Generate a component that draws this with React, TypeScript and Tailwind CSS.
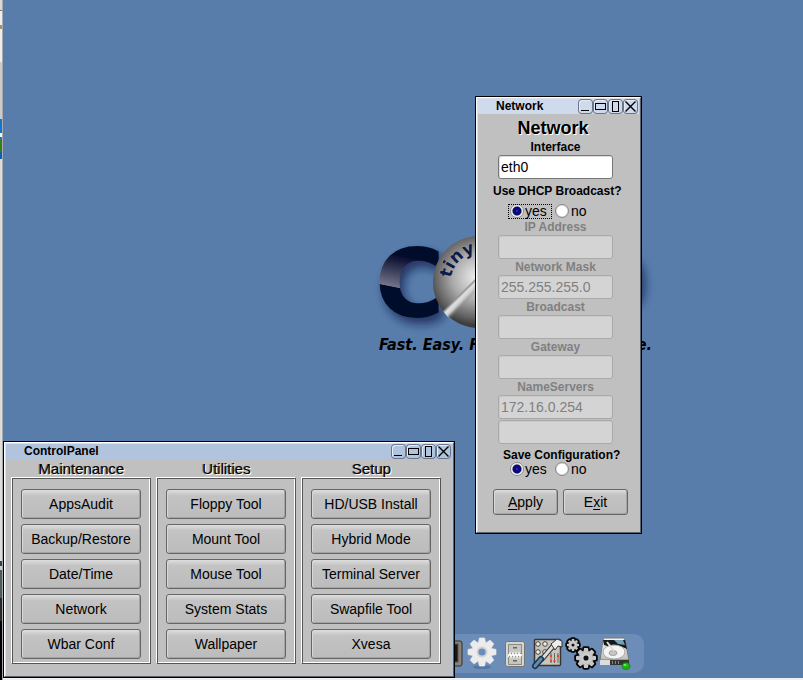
import type { ReactNode } from "react";

const sans = "font-['Liberation_Sans',Arial,sans-serif]";

const toolGroups = [
  { title: "Maintenance", tools: ["AppsAudit", "Backup/Restore", "Date/Time", "Network", "Wbar Conf"] },
  { title: "Utilities", tools: ["Floppy Tool", "Mount Tool", "Mouse Tool", "System Stats", "Wallpaper"] },
  { title: "Setup", tools: ["HD/USB Install", "Hybrid Mode", "Terminal Server", "Swapfile Tool", "Xvesa"] },
];

const windowControls = [
  { name: "Minimize", shape: <path d="M3 11.500h8" /> },
  { name: "Maximize width", shape: <rect x="2.5" y="4.5" width="10" height="6" /> },
  { name: "Maximize height", shape: <rect x="4.5" y="2.5" width="6" height="10" /> },
  { name: "Close", shape: <path d="M2.500 2.500l10 10M12.500 2.500l-10 10" strokeWidth="1.400" /> },
];

type WindowProps = { title: string; active?: boolean; place: string; children: ReactNode };

function Window({ title, active = false, place, children }: WindowProps) {
  const tint = active ? "bg-[#cfdaec]" : "bg-[#b0c4de]";
  return (
    <section aria-label={title} className={`absolute border border-black bg-[#c0c0c0] ${place}`}>
      <div className="border border-t-white border-l-white border-r-[#5e6268] border-b-[#5e6268]">
        <div className="border border-t-[#d8e0ec] border-l-[#d8e0ec] border-r-[#b0c4de] border-b-[#b0c4de]">
          <header className={`flex h-[15px] items-center justify-between pr-px ${tint}`}>
            <h2 className="pl-[18px] text-[12px] leading-[15px] font-bold">{title}</h2>
            <div className="flex">
              {windowControls.map((c) => (
                <button
                  key={c.name}
                  type="button"
                  aria-label={c.name}
                  className="h-[15px] w-[15px] rounded-[4px] shadow-[inset_0_0_0_1px_#69758a,inset_1px_1px_0_1px_#e6edf7]"
                >
                  <svg viewBox="0 0 15 15" className="block h-[15px] w-[15px]" fill="none" stroke="#000" strokeWidth="1">
                    {c.shape}
                  </svg>
                </button>
              ))}
            </div>
          </header>
          {children}
        </div>
      </div>
    </section>
  );
}

function PushButton({ className, children }: { className: string; children: ReactNode }) {
  return (
    <button
      type="button"
      className={`rounded-[3px] border border-[#666] bg-linear-to-b from-[#dedede] via-[#c3c3c3] via-20% to-[#bcbcbc] text-[14px] leading-4 text-black shadow-[inset_1px_0_0_#d8d8d8,inset_-1px_-1px_0_#a4a4a4] ${className}`}
    >
      {children}
    </button>
  );
}

function ControlPanel() {
  return (
    <Window title="ControlPanel" place="left-0 top-[441px] w-[452px]">
      <div className="grid grid-cols-3 gap-[6px] pr-[11px] pb-[11px] pl-[6px]">
        {toolGroups.map((g) => (
          <div key={g.title}>
            <h3 className="h-[19px] text-center text-[15px] leading-[19px] [text-shadow:-1px_0_#777,1px_1px_#fff]">{g.title}</h3>
            <div className="flex flex-col gap-[5px] border border-[#555] pt-[10px] pr-[9px] pb-1 pl-2 shadow-[-1px_-1px_0_#fff,inset_-1px_-1px_0_#fff]">
              {g.tools.map((t) => (
                <PushButton key={t} className="h-[30px]">
                  {t}
                </PushButton>
              ))}
            </div>
          </div>
        ))}
      </div>
    </Window>
  );
}

function TextField({ id, label, value = "", disabled = true }: { id: string; label?: string; value?: string; disabled?: boolean }) {
  return (
    <div className="mx-[5px] w-[115px]">
      {label && (
        <label htmlFor={id} className={`block h-4 text-center text-[12px] leading-4 font-bold ${disabled ? "text-[#808080]" : "text-black"}`}>
          {label}
        </label>
      )}
      <input
        id={id}
        type="text"
        aria-label={label ? undefined : "Second name server"}
        defaultValue={value}
        disabled={disabled}
        className="block h-6 w-full rounded-[3px] border border-[#777] bg-white px-[2px] text-[14px] leading-4 text-black shadow-[inset_1px_1px_0_#ddd] disabled:border-[#a9a9a9] disabled:bg-[#d4d4d4] disabled:text-[#808080] disabled:shadow-[inset_1px_1px_0_#cacaca]"
      />
    </div>
  );
}

function YesNo({ name, focused = false }: { name: string; focused?: boolean }) {
  const radio =
    "h-[14px] w-[14px] shrink-0 appearance-none rounded-full border border-[#8c8c8c] bg-[radial-gradient(circle,#fff_55%,#c8c8c8_75%)] checked:bg-[radial-gradient(circle_at_6px_6px,#5560c8_0,#0c0c88_1px,#06066e_4px,#e4e4e4_5px,#fff_6px)]";
  return (
    <div className="flex h-4 items-center gap-[3px] pl-[15px]">
      <label className={`flex h-[15px] w-[44px] items-center gap-px pl-[2px] text-[14px] leading-4 ${focused ? "outline-1 -outline-offset-1 outline-dotted outline-black" : ""}`}>
        <input type="radio" name={name} defaultChecked className={radio} />
        yes
      </label>
      <label className="flex items-center gap-[2px] text-[14px] leading-4">
        <input type="radio" name={name} className={radio} />
        no
      </label>
    </div>
  );
}

function NetworkWindow() {
  return (
    <Window title="Network" active place="left-[472px] top-[96px] w-[167px]">
      <form className="pt-1 pr-[11px] pb-4 pl-[15px]">
        <h3 className="mx-[5px] mb-px h-5 w-[110px] text-center text-[18px] leading-5 font-bold [text-shadow:1px_1px_#fff]">Network</h3>
        <TextField id="interface" label="Interface" value="eth0" disabled={false} />
        <fieldset className="mt-1">
          <legend className="h-5 text-[12px] leading-4 font-bold whitespace-nowrap">Use DHCP Broadcast?</legend>
          <YesNo name="dhcp" focused />
        </fieldset>
        <TextField id="ip" label="IP Address" />
        <TextField id="mask" label="Network Mask" value="255.255.255.0" />
        <TextField id="broadcast" label="Broadcast" />
        <TextField id="gateway" label="Gateway" />
        <TextField id="dns1" label="NameServers" value="172.16.0.254" />
        <div className="pt-px">
          <TextField id="dns2" />
        </div>
        <fieldset className="mt-[5px]">
          <legend className="h-3 pl-[10px] text-[12px] leading-3 font-bold whitespace-nowrap">Save Configuration?</legend>
          <YesNo name="save" />
        </fieldset>
        <div className="mt-3 flex gap-[5px]">
          <PushButton className="h-[26px] flex-1">
            <span className="underline underline-offset-2">A</span>pply
          </PushButton>
          <PushButton className="h-[26px] flex-1">
            E<span className="underline underline-offset-2">x</span>it
          </PushButton>
        </div>
      </form>
    </Window>
  );
}

function Logo() {
  return (
    <div className="absolute top-[231px] left-[371px] w-[282px]">
      <svg viewBox="374 231 282 105" className="block h-[105px] w-[282px] overflow-visible">
        <defs>
          <linearGradient id="shine" gradientUnits="userSpaceOnUse" x1="412" y1="248" x2="398" y2="318">
            <stop offset="0.14" stopColor="#050c2c" />
            <stop offset="0.2" stopColor="#131837" />
            <stop offset="0.58" stopColor="#73738b" />
            <stop offset="0.59" stopColor="#040b2a" />
          </linearGradient>
          <radialGradient id="ball" gradientUnits="userSpaceOnUse" cx="476" cy="277" r="48">
            <stop offset="0" stopColor="#eee" />
            <stop offset="0.5" stopColor="#aaa" />
            <stop offset="0.85" stopColor="#626262" />
            <stop offset="1" stopColor="#3d3d3d" />
          </radialGradient>
          <linearGradient id="glint" gradientUnits="userSpaceOnUse" x1="457" y1="293" x2="466" y2="302">
            <stop offset="0" stopColor="#666" stopOpacity="0" />
            <stop offset="0.3" stopColor="#999" />
            <stop offset="0.45" stopColor="#e2e2e2" />
            <stop offset="0.7" stopColor="#ccc" />
            <stop offset="1" stopColor="#888" stopOpacity="0.2" />
          </linearGradient>
          <filter id="soft" x="-60%" y="-60%" width="220%" height="220%">
            <feGaussianBlur stdDeviation="5" />
          </filter>
          <filter id="cast" x="-30%" y="-30%" width="160%" height="160%">
            <feDropShadow dx="4" dy="6" stdDeviation="5" floodColor="#0b1c48" floodOpacity="0.75" />
          </filter>
          <path id="rim" d="M451 278A29 29 0 0 1 508 275" />
        </defs>
        <text x="376" y="316" fontFamily="'DejaVu Sans', sans-serif" fontWeight="bold" fontSize="92" fill="url(#shine)" stroke="url(#shine)" strokeWidth="2" filter="url(#cast)">
          C
        </text>
        <ellipse cx="634" cy="284" rx="11" ry="24" fill="#0b1c48" opacity="0.7" filter="url(#soft)" />
        <circle cx="479" cy="282" r="46" fill="url(#ball)" />
        <path d="M443 311L482 272V286L450 320Z" fill="url(#glint)" />
        <text fontFamily="'DejaVu Sans', sans-serif" fontWeight="bold" fontSize="17" fill="#101a49" stroke="#aaa" strokeWidth="0.6" paintOrder="stroke">
          <textPath href="#rim">tiny</textPath>
        </text>
      </svg>
      <p className="flex justify-between pr-1 pl-[5px] font-['DejaVu_Sans_Condensed','DejaVu_Sans',sans-serif] text-[16px] leading-[18px] font-bold italic">
        <span>Fast. Easy. F</span>
        <span>e.</span>
      </p>
    </div>
  );
}

const teeth = [0, 45, 90, 135, 180, 225, 270, 315];

type GearProps = { x: number; y: number; r: number; fill: string; edge: string; edgeWidth: number; hole: string };

function Gear({ x, y, r, fill, edge, edgeWidth, hole }: GearProps) {
  const body = (
    <>
      <circle r="10" />
      {teeth.map((a) => (
        <path key={a} d="M-3.600-9L-2.600-14H2.600L3.600-9Z" transform={`rotate(${a})`} />
      ))}
    </>
  );
  return (
    <g transform={`translate(${x} ${y}) scale(${r / 14})`}>
      <g fill={edge} stroke={edge} strokeWidth={edgeWidth} strokeLinejoin="round">
        {body}
      </g>
      <g fill={fill}>{body}</g>
      <circle r="5.500" fill="#d2d2d2" />
      <circle r="3.600" fill={hole} />
    </g>
  );
}

function Dock() {
  return (
    <div className="absolute bottom-[5px] left-1/2 flex w-[482px] -translate-x-1/2 justify-end rounded-[10px] bg-[#6c8db7]">
      <svg viewBox="440 634 204 39" className="block h-[39px] w-[204px] overflow-visible" aria-hidden="true">
        <defs>
          <linearGradient id="metal" x1="0" y1="0" x2="0" y2="1">
            <stop offset="0" stopColor="#f5f5f5" />
            <stop offset="1" stopColor="#bcbcb8" />
          </linearGradient>
        </defs>
        <rect x="438" y="641" width="24" height="25" rx="2" fill="#8a8274" stroke="#332f2a" />
        <rect x="438" y="644" width="20" height="18" fill="#161616" stroke="#555" />

        <ellipse cx="482" cy="667" rx="9" ry="2" fill="#56779f" />
        <Gear x={482} y={652} r={14} fill="#ececec" edge="#c4ccd6" edgeWidth={1} hole="#6c8db7" />

        <rect x="505.500" y="641.500" width="19" height="25" rx="2" fill="#d6d6d0" stroke="#77776f" />
        <rect x="508.500" y="644.500" width="13" height="9" fill="#c4c6bf" stroke="#8c8c84" />
        <rect x="508.500" y="656.500" width="13" height="8" fill="#c4c6bf" stroke="#8c8c84" />
        <path d="M513 647h4v1.500h-4zM513 660h4v1.500h-4z" fill="#666" />
        <path d="M508 657l2-4 1 4 2-4 1 4 2-4 1 4 2-4 1 4 1-3" fill="none" stroke="#fff" strokeWidth="1.200" />

        <rect x="534.500" y="639.500" width="26" height="26" rx="1" fill="#c9c5bd" stroke="#393532" strokeWidth="1.500" />
        {[538, 545].map((cx) => [644, 652].map((cy) => <circle key={`${cx}-${cy}`} cx={cx} cy={cy} r="2.300" fill="#eee" stroke="#474442" />))}
        <path d="M551 653v10M554.500 653v10M558 653v10" stroke="#686868" />
        <path d="M550 656h2M553.500 661h2M557 656h2M550 661h2" stroke="#e04a20" strokeWidth="2" />
        <path d="M542 659L554 645" stroke="#333" strokeWidth="5" strokeLinecap="round" />
        <path d="M542 659L554 645" stroke="#ddd" strokeWidth="3" strokeLinecap="round" />
        <path d="M551 644l6-5 5 2v6l-4-1-3 4z" fill="#ededed" stroke="#333" />
        <path d="M535 666L541 659" stroke="#18344e" strokeWidth="6" strokeLinecap="round" />
        <path d="M535 666L541 659" stroke="#628bb1" strokeWidth="3" strokeLinecap="round" />

        <Gear x={573} y={645} r={6} fill="#c8c8c8" edge="#050505" edgeWidth={8} hole="#111" />
        <Gear x={586} y={658} r={10} fill="#c8c8c8" edge="#050505" edgeWidth={5} hole="#111" />

        <path d="M603 640q0-2 2-2h18q2 0 2 2l4 20H600z" fill="url(#metal)" stroke="#777" />
        <path d="M603 640h22l2 9-7-3-6 2-10-3z" fill="#15191c" />
        <path d="M614 640h9l2 5-7-1z" fill="#73a0b4" />
        <ellipse cx="614" cy="652" rx="11" ry="7" fill="#f4f4f4" stroke="#aaa" />
        <ellipse cx="613" cy="653" rx="4" ry="2.500" fill="#c7c7c7" stroke="#888" strokeWidth="0.700" />
        <path d="M607 642l7 9" stroke="#ddd" strokeWidth="2" />
        <path d="M600 660h29v5H600z" fill="#333" />
        <path d="M600 660h10v5h-10z" fill="#ddd" />
        <path d="M612.500 661v3M615.500 661v3M618.500 661v3" stroke="#888" />
        <ellipse cx="626" cy="666" rx="4" ry="3.500" fill="#19b80e" stroke="#16720e" strokeWidth="0.700" />
        <ellipse cx="625" cy="665" rx="1.500" ry="1" fill="#79f068" />
      </svg>
    </div>
  );
}

/* Sliver of the host screen that shows beside the virtual desktop. */
function HostEdge() {
  return (
    <div className="flex w-[3px] shrink-0 flex-col border-r border-[#a4aab0] bg-[#dcdcd8]" aria-hidden="true">
      <div className="h-[10px] bg-[#d8d8d4]" />
      <div className="h-px bg-[#777]" />
      <div className="h-[14px] bg-[#eee]" />
      <div className="h-1 bg-[#a68e70]" />
      <div className="h-[33px] bg-[#eee]" />
      <div className="h-[57px] bg-[#ccc]" />
      <div className="h-[14px] bg-[#1277ca]" />
      <div className="h-1 bg-white" />
      <div className="h-[3px] bg-[#1277ca]" />
      <div className="h-3 bg-[#397b15]" />
      <div className="h-[7px] bg-[#0c62b2]" />
      <div className="h-[402px] bg-[#deded9]" />
      <div className="h-[5px] bg-[#34423f]" />
      <div className="h-1 bg-[#ccc]" />
      <div className="h-[28px] bg-[#4a5b59]" />
      <div className="h-[23px] bg-[#292725]" />
      <div className="flex-1 bg-black" />
    </div>
  );
}

export default function App() {
  return (
    <div className={`flex h-screen min-h-[680px] bg-[#f0f0f0] text-black ${sans}`}>
      <HostEdge />
      <main className="relative mb-[2px] flex-1 overflow-hidden bg-[#587dab]">
        <Logo />
        <Dock />
        <ControlPanel />
        <NetworkWindow />
      </main>
    </div>
  );
}
